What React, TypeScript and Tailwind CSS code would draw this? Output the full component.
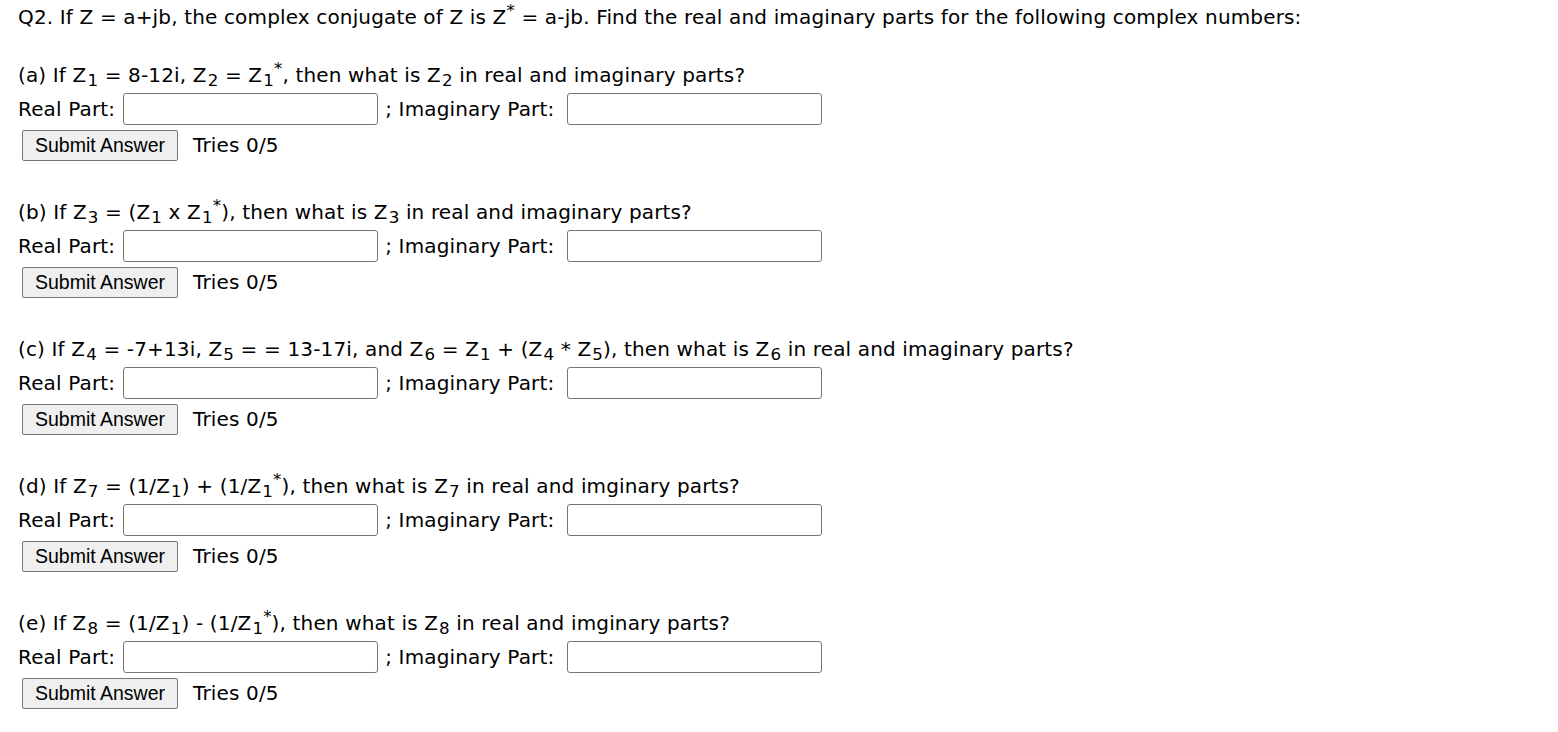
import React from 'react';

const font = { fontFamily: '"DejaVu Sans", Verdana, sans-serif' };

function Sub({ children }: { children: React.ReactNode }) {
  return <sub className="text-[0.833em] ml-[1px]">{children}</sub>;
}
function Star() {
  return <sup className="text-[0.833em]">*</sup>;
}

function AnswerBlock({ question }: { question: React.ReactNode }) {
  return (
    <div className="mb-[31px]">
      <div className="h-[34px] flex items-center">{question}</div>
      <div className="h-[34px] flex items-center">
        <span>Real Part:</span>
        <input
          type="text"
          className="ml-[8px] w-[255px] h-[32px] border border-[#767676] rounded-[3px] bg-white"
        />
        <span className="ml-[7px]">; Imaginary Part:</span>
        <input
          type="text"
          className="ml-[13px] w-[255px] h-[32px] border border-[#767676] rounded-[3px] bg-white"
        />
      </div>
      <div className="h-[38px] flex items-center">
        <button
          className="ml-[4px] h-[31px] w-[156px] border border-[#767676] rounded-[2px] bg-[#efefef] text-[19.5px] tracking-normal text-black"
          style={{ fontFamily: '"Liberation Sans", Arial, sans-serif' }}
        >
          Submit Answer
        </button>
        <span className="ml-[15px]">Tries 0/5</span>
      </div>
    </div>
  );
}

export default function App() {
  return (
    <div className="min-h-screen bg-white text-black text-[20px] tracking-[0.15px]" style={font}>
      <div className="pl-[18px]">
        <div className="h-[34px] flex items-center mb-[24px]">
          <span>
            Q2. If Z = a+jb, the complex conjugate of Z is Z<Star /> = a-jb. Find the real and imaginary parts for the following complex numbers:
          </span>
        </div>

        <AnswerBlock
          question={
            <span>
              (a) If Z<Sub>1</Sub> = 8-12i, Z<Sub>2</Sub> = Z<Sub>1</Sub><Star />, then what is Z<Sub>2</Sub> in real and imaginary parts?
            </span>
          }
        />
        <AnswerBlock
          question={
            <span>
              (b) If Z<Sub>3</Sub> = (Z<Sub>1</Sub> x Z<Sub>1</Sub><Star />), then what is Z<Sub>3</Sub> in real and imaginary parts?
            </span>
          }
        />
        <AnswerBlock
          question={
            <span>
              (c) If Z<Sub>4</Sub> = -7+13i, Z<Sub>5</Sub> = = 13-17i, and Z<Sub>6</Sub> = Z<Sub>1</Sub> + (Z<Sub>4</Sub> * Z<Sub>5</Sub>), then what is Z<Sub>6</Sub> in real and imaginary parts?
            </span>
          }
        />
        <AnswerBlock
          question={
            <span>
              (d) If Z<Sub>7</Sub> = (1/Z<Sub>1</Sub>) + (1/Z<Sub>1</Sub><Star />), then what is Z<Sub>7</Sub> in real and imginary parts?
            </span>
          }
        />
        <AnswerBlock
          question={
            <span>
              (e) If Z<Sub>8</Sub> = (1/Z<Sub>1</Sub>) - (1/Z<Sub>1</Sub><Star />), then what is Z<Sub>8</Sub> in real and imginary parts?
            </span>
          }
        />
      </div>
    </div>
  );
}
